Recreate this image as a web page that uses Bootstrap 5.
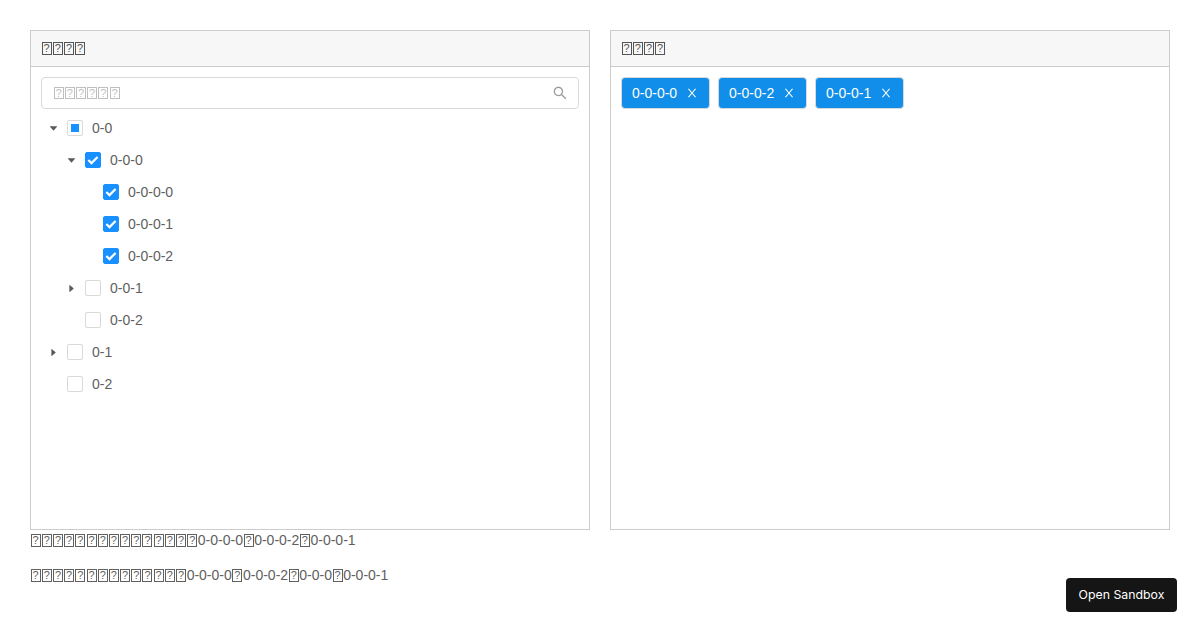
<!DOCTYPE html>
<html lang="zh">
<head>
<meta charset="utf-8">
<title>Tree</title>
<link href="https://cdn.jsdelivr.net/npm/bootstrap@5.3.0/dist/css/bootstrap.min.css" rel="stylesheet">
<style>
body{font-family:"Liberation Sans",sans-serif;font-size:14px;line-height:1.5;color:#606060;background:#fff}
.page-wrap{padding:30px}
.panel-box{height:500px;width:560px;border:1px solid #ccc;border-radius:0;background:#fff;color:#606060}
.panel-head{height:36px;padding:0 10px;background:#f7f7f7;border-bottom:1px solid #ccc;border-radius:0!important;display:flex;align-items:center;color:#555}
.panel-body{padding:10px}
.tofu{display:inline-block;box-sizing:border-box;width:10px;height:12.5px;margin:0 .6px;border:1px solid currentColor;font-size:11px;line-height:10.5px;text-align:center;vertical-align:-1.5px;overflow:hidden}
.search-box{height:32px;border:1px solid #d9d9d9;border-radius:4px;padding:0 11px;background:#fff}
.search-hint{flex:1;color:#bfbfbf;display:flex;align-items:center}
.search-ico{width:14px;height:14px;fill:#999}
.tree-list,.tree-list ul{list-style:none;margin:0;padding:0}
.tree-list{padding-top:3px}
.tree-list ul{padding-left:18px}
.tree-row{height:32px}
.tree-sw{width:24px;display:flex;justify-content:center;flex:none}
.tree-sw svg{width:9px;height:9px;fill:#595959}
.tree-sw .car-r{transform:rotate(-90deg)}
.tree-cb{width:16px;height:16px;border:1px solid #d9d9d9;border-radius:2px;margin:0 9px 0 2px;flex:none;background:#fff;display:flex;align-items:center;justify-content:center}
.tree-cb.on{background:#1890ff;border-color:#1890ff}
.tree-cb.part::after{content:"";width:8px;height:8px;background:#1890ff}
.tree-cb svg{width:14px;height:14px}
.tag-item{height:32px;padding:0 10.4px 0 10px;background:#108ee9;border:1px solid #d9d9d9;border-radius:4px;color:#fff;gap:9px}
.tag-item svg{width:12px;height:12px;fill:#fff}
.tag-list{gap:8.5px}
.note-line{margin:0 0 14px;line-height:21px}
.sandbox-btn{position:fixed;right:23px;bottom:18px;height:34px;width:111px;background:#151515;color:#fff;border:0;border-radius:4px;font-family:Inter,sans-serif;font-size:12.3px;padding:0}
.sandbox-btn:hover{background:#151515;color:#fff}
</style>
</head>
<body>
<div class="page-wrap">
  <div class="d-flex justify-content-between">
    <div class="card panel-box">
      <div class="card-header panel-head"><span><span class="tofu">?</span><span class="tofu">?</span><span class="tofu">?</span><span class="tofu">?</span></span></div>
      <div class="panel-body">
        <div class="search-box d-flex align-items-center">
          <span class="search-hint"><span class="tofu">?</span><span class="tofu">?</span><span class="tofu">?</span><span class="tofu">?</span><span class="tofu">?</span><span class="tofu">?</span></span>
          <svg class="search-ico" viewBox="64 64 896 896"><path d="M909.6 854.5L649.9 594.8C690.2 542.7 712 479 712 412c0-80.2-31.3-155.4-87.9-212.1-56.6-56.7-132-87.9-212.1-87.9s-155.5 31.3-212.1 87.9C143.2 256.5 112 331.8 112 412c0 80.1 31.3 155.5 87.9 212.1C256.5 680.8 331.8 712 412 712c67 0 130.6-21.8 182.7-62l259.7 259.6a8.2 8.2 0 0 0 11.6 0l43.6-43.5a8.2 8.2 0 0 0 0-11.6zM570.4 570.4C528 612.7 471.8 636 412 636s-116-23.3-158.4-65.6C211.3 528 188 471.8 188 412s23.3-116.1 65.6-158.4C296 211.3 352.2 188 412 188s116.1 23.2 158.4 65.6S636 352.2 636 412s-23.3 116.1-65.6 158.4z"/></svg>
        </div>
        <ul class="tree-list">
          <li>
            <div class="tree-row d-flex align-items-center"><span class="tree-sw"><svg viewBox="64 64 896 896"><path d="M840.4 300H183.6c-19.7 0-30.7 20.8-18.5 35l328.4 380.8c9.4 10.9 27.5 10.9 37 0L858.9 335c12.2-14.2 1.2-35-18.5-35z"/></svg></span><span class="tree-cb part"></span><span>0-0</span></div>
            <ul>
              <li>
                <div class="tree-row d-flex align-items-center"><span class="tree-sw"><svg viewBox="64 64 896 896"><path d="M840.4 300H183.6c-19.7 0-30.7 20.8-18.5 35l328.4 380.8c9.4 10.9 27.5 10.9 37 0L858.9 335c12.2-14.2 1.2-35-18.5-35z"/></svg></span><span class="tree-cb on"><svg viewBox="1 1 14 14"><path d="M3.3 8l3.2 3.1 6.1-6.2" fill="none" stroke="#fff" stroke-width="2.2"/></svg></span><span>0-0-0</span></div>
                <ul>
                  <li><div class="tree-row d-flex align-items-center"><span class="tree-sw"></span><span class="tree-cb on"><svg viewBox="1 1 14 14"><path d="M3.3 8l3.2 3.1 6.1-6.2" fill="none" stroke="#fff" stroke-width="2.2"/></svg></span><span>0-0-0-0</span></div></li>
                  <li><div class="tree-row d-flex align-items-center"><span class="tree-sw"></span><span class="tree-cb on"><svg viewBox="1 1 14 14"><path d="M3.3 8l3.2 3.1 6.1-6.2" fill="none" stroke="#fff" stroke-width="2.2"/></svg></span><span>0-0-0-1</span></div></li>
                  <li><div class="tree-row d-flex align-items-center"><span class="tree-sw"></span><span class="tree-cb on"><svg viewBox="1 1 14 14"><path d="M3.3 8l3.2 3.1 6.1-6.2" fill="none" stroke="#fff" stroke-width="2.2"/></svg></span><span>0-0-0-2</span></div></li>
                </ul>
              </li>
              <li><div class="tree-row d-flex align-items-center"><span class="tree-sw"><svg class="car-r" viewBox="64 64 896 896"><path d="M840.4 300H183.6c-19.7 0-30.7 20.8-18.5 35l328.4 380.8c9.4 10.9 27.5 10.9 37 0L858.9 335c12.2-14.2 1.2-35-18.5-35z"/></svg></span><span class="tree-cb"></span><span>0-0-1</span></div></li>
              <li><div class="tree-row d-flex align-items-center"><span class="tree-sw"></span><span class="tree-cb"></span><span>0-0-2</span></div></li>
            </ul>
          </li>
          <li><div class="tree-row d-flex align-items-center"><span class="tree-sw"><svg class="car-r" viewBox="64 64 896 896"><path d="M840.4 300H183.6c-19.7 0-30.7 20.8-18.5 35l328.4 380.8c9.4 10.9 27.5 10.9 37 0L858.9 335c12.2-14.2 1.2-35-18.5-35z"/></svg></span><span class="tree-cb"></span><span>0-1</span></div></li>
          <li><div class="tree-row d-flex align-items-center"><span class="tree-sw"></span><span class="tree-cb"></span><span>0-2</span></div></li>
        </ul>
      </div>
    </div>
    <div class="card panel-box">
      <div class="card-header panel-head"><span><span class="tofu">?</span><span class="tofu">?</span><span class="tofu">?</span><span class="tofu">?</span></span></div>
      <div class="panel-body">
        <div class="d-flex tag-list">
          <span class="tag-item d-inline-flex align-items-center">0-0-0-0<svg viewBox="64 64 896 896"><path d="M563.8 512l262.5-312.9c4.4-5.2.7-13.1-6.1-13.1h-79.8c-4.7 0-9.2 2.1-12.3 5.7L511.6 449.8 295.1 191.7c-3-3.6-7.5-5.7-12.3-5.7H203c-6.8 0-10.5 7.9-6.1 13.1L459.4 512 196.9 824.9A7.95 7.95 0 0 0 203 838h79.8c4.7 0 9.2-2.1 12.3-5.7l216.5-258.1 216.5 258.1c3 3.6 7.5 5.7 12.3 5.7h79.8c6.8 0 10.5-7.9 6.1-13.1L563.8 512z"/></svg></span>
          <span class="tag-item d-inline-flex align-items-center">0-0-0-2<svg viewBox="64 64 896 896"><path d="M563.8 512l262.5-312.9c4.4-5.2.7-13.1-6.1-13.1h-79.8c-4.7 0-9.2 2.1-12.3 5.7L511.6 449.8 295.1 191.7c-3-3.6-7.5-5.7-12.3-5.7H203c-6.8 0-10.5 7.9-6.1 13.1L459.4 512 196.9 824.9A7.95 7.95 0 0 0 203 838h79.8c4.7 0 9.2-2.1 12.3-5.7l216.5-258.1 216.5 258.1c3 3.6 7.5 5.7 12.3 5.7h79.8c6.8 0 10.5-7.9 6.1-13.1L563.8 512z"/></svg></span>
          <span class="tag-item d-inline-flex align-items-center">0-0-0-1<svg viewBox="64 64 896 896"><path d="M563.8 512l262.5-312.9c4.4-5.2.7-13.1-6.1-13.1h-79.8c-4.7 0-9.2 2.1-12.3 5.7L511.6 449.8 295.1 191.7c-3-3.6-7.5-5.7-12.3-5.7H203c-6.8 0-10.5 7.9-6.1 13.1L459.4 512 196.9 824.9A7.95 7.95 0 0 0 203 838h79.8c4.7 0 9.2-2.1 12.3-5.7l216.5-258.1 216.5 258.1c3 3.6 7.5 5.7 12.3 5.7h79.8c6.8 0 10.5-7.9 6.1-13.1L563.8 512z"/></svg></span>
        </div>
      </div>
    </div>
  </div>
  <p class="note-line"><span class="tofu">?</span><span class="tofu">?</span><span class="tofu">?</span><span class="tofu">?</span><span class="tofu">?</span><span class="tofu">?</span><span class="tofu">?</span><span class="tofu">?</span><span class="tofu">?</span><span class="tofu">?</span><span class="tofu">?</span><span class="tofu">?</span><span class="tofu">?</span><span class="tofu">?</span><span class="tofu">?</span>0-0-0-0<span class="tofu">?</span>0-0-0-2<span class="tofu">?</span>0-0-0-1</p>
  <p class="note-line"><span class="tofu">?</span><span class="tofu">?</span><span class="tofu">?</span><span class="tofu">?</span><span class="tofu">?</span><span class="tofu">?</span><span class="tofu">?</span><span class="tofu">?</span><span class="tofu">?</span><span class="tofu">?</span><span class="tofu">?</span><span class="tofu">?</span><span class="tofu">?</span><span class="tofu">?</span>0-0-0-0<span class="tofu">?</span>0-0-0-2<span class="tofu">?</span>0-0-0<span class="tofu">?</span>0-0-0-1</p>
</div>
<button class="btn sandbox-btn">Open Sandbox</button>
<script src="https://cdn.jsdelivr.net/npm/bootstrap@5.3.0/dist/js/bootstrap.bundle.min.js"></script>
</body>
</html>
